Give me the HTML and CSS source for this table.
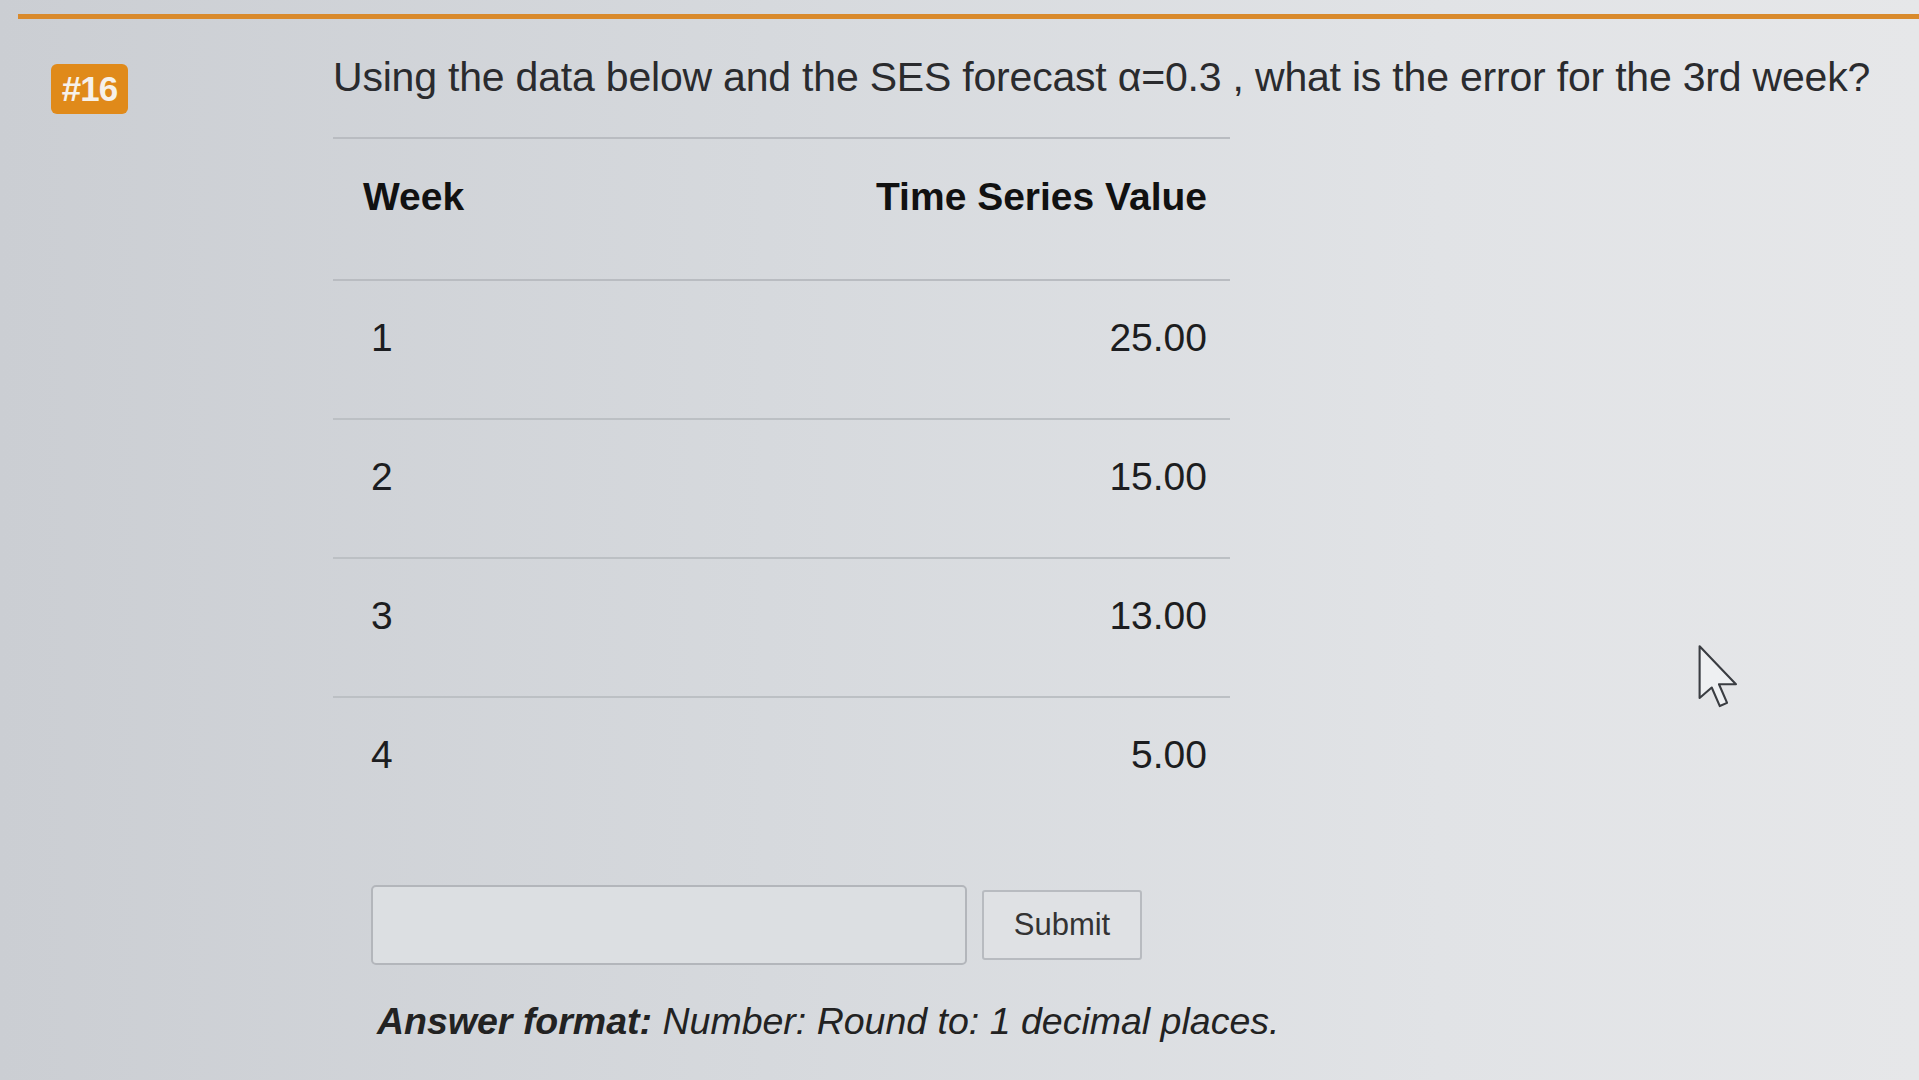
FILE: index.html
```html
<!DOCTYPE html>
<html>
<head>
<meta charset="utf-8">
<link rel="stylesheet" href="styles.css">
</head>
<body>
<div class="page">
  <div class="rule"></div>
  <div class="question">
    <div class="badge">#16</div>
    <div class="content">
      <p class="qtext">Using the data below and the SES forecast α=0.3 , what is the error for the 3rd week?</p>
      <table class="data">
        <thead>
          <tr><th class="c-week">Week</th><th class="c-val">Time Series Value</th></tr>
        </thead>
        <tbody>
          <tr><td class="c-week">1</td><td class="c-val">25.00</td></tr>
          <tr><td class="c-week">2</td><td class="c-val">15.00</td></tr>
          <tr><td class="c-week">3</td><td class="c-val">13.00</td></tr>
          <tr><td class="c-week">4</td><td class="c-val">5.00</td></tr>
        </tbody>
      </table>
      <div class="answer-row">
        <input class="answer" type="text">
        <button class="submit">Submit</button>
      </div>
      <p class="format"><b>Answer format:</b> Number: Round to: 1 decimal places.</p>
    </div>
  </div>
  <svg class="cursor" width="42" height="66" viewBox="0 0 26 40">
    <path d="M1 1 L1 33 L8.5 26.5 L13.5 38 L18 36 L13 24.5 L23.5 24.5 Z" fill="#eef0f2" stroke="#3a3d42" stroke-width="1.3" stroke-linejoin="round"/>
  </svg>
</div>
</body>
</html>
```

FILE: styles.css
```css
html, body {
  margin: 0;
  padding: 0;
}
body {
  width: 1919px;
  height: 1080px;
  overflow: hidden;
  background: linear-gradient(to right, #cbced3 0%, #d6d9dd 40%, #e1e3e6 75%, #e6e7e9 100%);
  font-family: "Liberation Sans", Arial, sans-serif;
  color: #222;
}
.page {
  position: relative;
  padding: 14px 0 0 18px;
  height: 1066px;
}
.rule {
  height: 5px;
  background: #d98a2c;
}
.question {
  display: flex;
  align-items: flex-start;
}
.badge {
  margin: 45px 0 0 33px;
  width: 77px;
  height: 50px;
  border-radius: 6px;
  background: #e08a1a;
  color: #f6f1ea;
  font-weight: bold;
  font-size: 35px;
  line-height: 50px;
  text-align: center;
  letter-spacing: -1px;
}
.content {
  margin-left: 205px;
  display: flex;
  flex-direction: column;
}
.qtext {
  margin: 34px 0 0 0;
  font-size: 41px;
  line-height: 48px;
  color: #2a2b2e;
  white-space: nowrap;
  letter-spacing: -0.2px;
}
.data {
  margin-top: 36px;
  width: 897px;
  border-collapse: collapse;
  border-top: 2px solid #b9bcc1;
  font-size: 39px;
  line-height: 46px;
}
.data th {
  font-weight: bold;
  color: #111;
  padding: 35px 23px 59px 30px;
  border-bottom: 2px solid #b9bcc1;
}
.data td {
  color: #1c1d20;
  padding: 34px 23px 57px 38px;
  border-bottom: 2px solid #bcc0c4;
}
.data tbody tr:last-child td {
  border-bottom: none;
}
.c-week {
  text-align: left;
}
.c-val {
  text-align: right;
}
.answer-row {
  display: flex;
  align-items: center;
  gap: 15px;
  margin: 50px 0 0 38px;
}
.answer {
  width: 596px;
  height: 80px;
  box-sizing: border-box;
  border: 2px solid #b3b6bb;
  border-radius: 5px;
  background: #dcdfe2;
  outline: none;
}
.submit {
  width: 160px;
  height: 70px;
  border: 2px solid #b8bbc0;
  border-radius: 3px;
  background: #dfe1e4;
  font-family: "Liberation Sans", Arial, sans-serif;
  font-size: 31px;
  color: #333;
  padding: 0;
}
.format {
  margin: 34px 0 0 44px;
  font-size: 37.5px;
  line-height: 44px;
  font-style: italic;
  color: #222;
  letter-spacing: 0;
  white-space: nowrap;
}
.format b {
  font-weight: bold;
}
.cursor {
  position: absolute;
  left: 1698px;
  top: 644px;
}
```
